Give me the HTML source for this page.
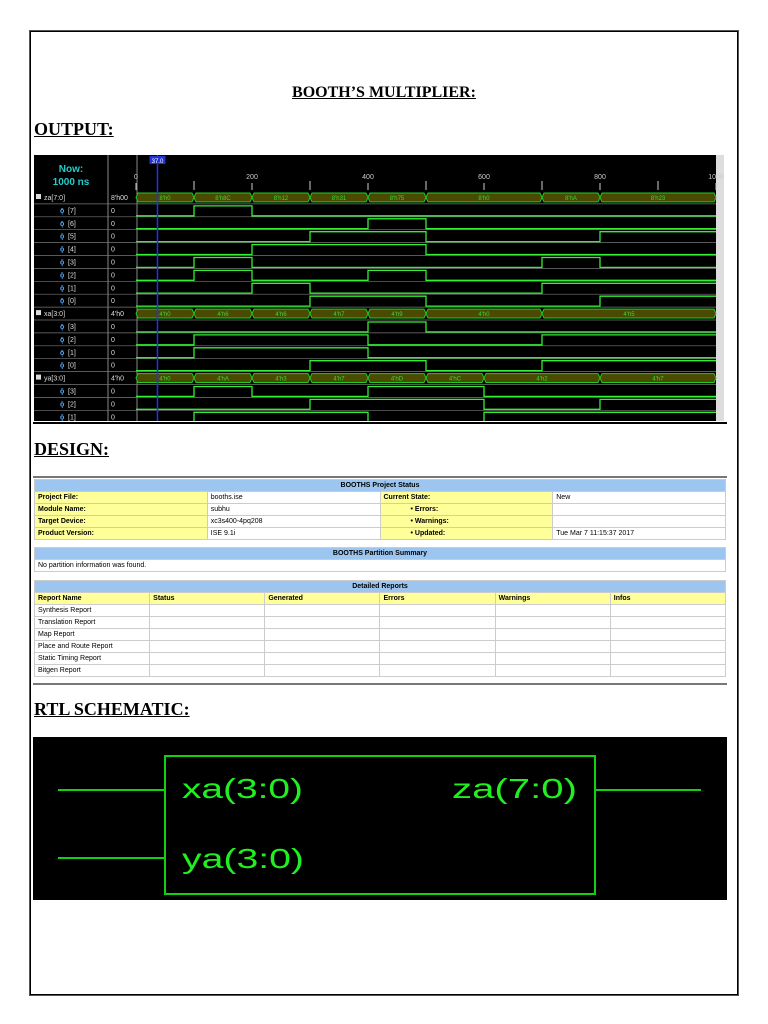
<!DOCTYPE html>
<html><head><meta charset="utf-8"><style>
body{margin:0;width:768px;height:1024px;background:#fff;position:relative;font-family:"Liberation Serif",serif;overflow:hidden}
.frame{position:absolute;left:30px;top:31px;width:706px;height:962px;border:1px solid #000;box-shadow:0 0 0 1px #555}
.h{position:absolute;font-weight:bold;text-decoration:underline;color:#000}
.line{position:absolute;left:33px;width:694px;height:1px;background:#000}
table{position:absolute;left:34px;width:692px;border-collapse:collapse;font-family:"Liberation Sans",sans-serif;font-size:7px;table-layout:fixed}
td{height:11px;padding:0 3px;border:1px solid #ccc;white-space:nowrap;overflow:hidden}
.hd td{background:#9cc6f0;text-align:center;font-weight:bold}
.y{background:#ffff99;font-weight:bold}
</style></head><body>
<div class="frame"></div>
<div class="h" style="left:0;width:768px;text-align:center;top:84px;font-size:16px">BOOTH’S MULTIPLIER:</div>
<div class="h" style="left:34px;top:119px;font-size:18px">OUTPUT:</div>
<div class="h" style="left:34px;top:439px;font-size:18px">DESIGN:</div>
<div class="h" style="left:34px;top:699px;font-size:18px">RTL SCHEMATIC:</div>
<div id="wv" style="position:absolute;left:34px;top:155px"></div>
<div class="line" style="top:422px;height:2px"></div>
<div class="line" style="top:476px;background:#777;height:2px"></div>
<div class="line" style="top:683px;background:#777;height:2px"></div>
<table style="top:479px">
<tr class="hd"><td colspan="4">BOOTHS Project Status</td></tr>
<tr><td class="y">Project File:</td><td>booths.ise</td><td class="y">Current State:</td><td>New</td></tr>
<tr><td class="y">Module Name:</td><td>subhu</td><td class="y" style="padding-left:30px">• Errors:</td><td></td></tr>
<tr><td class="y">Target Device:</td><td>xc3s400-4pq208</td><td class="y" style="padding-left:30px">• Warnings:</td><td></td></tr>
<tr><td class="y">Product Version:</td><td>ISE 9.1i</td><td class="y" style="padding-left:30px">• Updated:</td><td>Tue Mar 7 11:15:37 2017</td></tr>
</table>
<table style="top:547px">
<tr class="hd"><td>BOOTHS Partition Summary</td></tr>
<tr><td>No partition information was found.</td></tr>
</table>
<table style="top:580px">
<tr class="hd"><td colspan="6">Detailed Reports</td></tr>
<tr><td class="y">Report Name</td><td class="y">Status</td><td class="y">Generated</td><td class="y">Errors</td><td class="y">Warnings</td><td class="y">Infos</td></tr>
<tr><td>Synthesis Report</td><td></td><td></td><td></td><td></td><td></td></tr>
<tr><td>Translation Report</td><td></td><td></td><td></td><td></td><td></td></tr>
<tr><td>Map Report</td><td></td><td></td><td></td><td></td><td></td></tr>
<tr><td>Place and Route Report</td><td></td><td></td><td></td><td></td><td></td></tr>
<tr><td>Static Timing Report</td><td></td><td></td><td></td><td></td><td></td></tr>
<tr><td>Bitgen Report</td><td></td><td></td><td></td><td></td><td></td></tr>
</table>
<svg style="position:absolute;left:33px;top:737px" width="694" height="162">
<rect width="694" height="162" fill="#000"/>
<g stroke="#10d010" stroke-width="2" fill="none">
<rect x="132" y="19" width="430" height="138"/>
<line x1="25" y1="53" x2="132" y2="53"/><line x1="25" y1="121" x2="132" y2="121"/><line x1="562" y1="53" x2="668" y2="53"/>
</g>
<g fill="#20f020" font-family="Liberation Sans,sans-serif" font-size="28">
<text x="149" y="61" textLength="121" lengthAdjust="spacingAndGlyphs">xa(3:0)</text>
<text x="419" y="61" textLength="125" lengthAdjust="spacingAndGlyphs">za(7:0)</text>
<text x="149" y="131" textLength="122" lengthAdjust="spacingAndGlyphs">ya(3:0)</text></g>
</svg>
<div class="line" style="top:898px;height:2px"></div>
<script>
var X=function(t){return 136+58*t/100};
var s='<svg width="690" height="266" font-family="Liberation Sans,sans-serif">';
s+='<rect width="690" height="266" fill="#000"/><rect x="682" y="0" width="8" height="266" fill="#ddd"/>';
s+='<line x1="74" y1="0" x2="74" y2="266" stroke="#888"/><line x1="103" y1="0" x2="103" y2="266" stroke="#888"/>';
s+='<text x="37" y="17" fill="#2cc" font-size="10" font-weight="bold" text-anchor="middle">Now:</text><text x="37" y="30" fill="#2cc" font-size="10" font-weight="bold" text-anchor="middle">1000 ns</text>';
for(var k=0;k<=10;k++){var x=X(k*100)-34;s+='<line x1="'+x+'" y1="'+(k%2?26:28)+'" x2="'+x+'" y2="35" stroke="#ccc"/>';if(k%2==0)s+='<text x="'+x+'" y="24" fill="#ccc" font-size="7" text-anchor="middle">'+(k*100)+'</text>';}
var rows=[];
function bus(name,w,tr,vals,hex){rows.push({bus:1,name:name,tr:tr,vals:vals,w:w});for(var b=w-1;b>=0;b--)rows.push({name:'['+b+']',tr:tr,vals:vals,b:b});}
bus('za[7:0]',8,[100,200,300,400,500,700,800],[0,0x8C,0x12,0x31,0x75,0,0x0A,0x23]);
bus('xa[3:0]',4,[100,200,300,400,500,700],[0,6,6,7,9,0,5]);
bus('ya[3:0]',4,[100,200,300,400,500,600,800],[0,0xA,3,7,0xD,0xC,2,7]);
var y0=36,rh=12.9;
rows.forEach(function(r,i){var y=y0+i*rh;
 s+='<line x1="0" y1="'+(y+rh)+'" x2="682" y2="'+(y+rh)+'" stroke="#777" stroke-width="0.7"/>';
 var ed=[0].concat(r.tr).concat([1000]);
 if(r.bus){s+='<rect x="2" y="'+(y+3)+'" width="5" height="5" fill="#ddd"/><text x="10" y="'+(y+9)+'" fill="#ddd" font-size="7">'+r.name+'</text><text x="77" y="'+(y+9)+'" fill="#ddd" font-size="7">'+(r.w==8?"8'h00":"4'h0")+'</text>';
  for(var j=0;j<r.vals.length;j++){var a=X(ed[j])-34,b=X(ed[j+1])-34;s+='<polygon points="'+(a+2)+','+(y+2)+' '+(b-2)+','+(y+2)+' '+b+','+(y+rh/2)+' '+(b-2)+','+(y+rh-2)+' '+(a+2)+','+(y+rh-2)+' '+a+','+(y+rh/2)+'" fill="#4a4a00" stroke="#2c2"/>';
  s+='<text x="'+((a+b)/2)+'" y="'+(y+9)+'" fill="#3d3" font-size="6" text-anchor="middle">'+(r.w==8?"8'h":"4'h")+r.vals[j].toString(16).toUpperCase()+'</text>';}
 } else {s+='<text x="26" y="'+(y+9)+'" fill="#5af" font-size="7" font-weight="bold">ǭ</text><text x="34" y="'+(y+9)+'" fill="#ddd" font-size="7">'+r.name+'</text><text x="77" y="'+(y+9)+'" fill="#ddd" font-size="7">0</text>';
  var p='';for(var j=0;j<r.vals.length;j++){var v=(r.vals[j]>>r.b)&1,yy=v?y+2:y+rh-1,a=X(ed[j])-34,b=X(ed[j+1])-34;p+=(j?' L':'M')+a+','+yy+' L'+b+','+yy;}
  s+='<path d="'+p+'" fill="none" stroke="#3e3" stroke-width="1.3"/>';}
});
var cx=X(37)-34;s+='<line x1="'+cx+'" y1="0" x2="'+cx+'" y2="266" stroke="#23e" stroke-width="1.5"/><rect x="'+(cx-8)+'" y="1" width="16" height="8" fill="#23c"/><text x="'+cx+'" y="8" fill="#fff" font-size="6" text-anchor="middle">37.0</text>';
s+='</svg>';document.getElementById('wv').innerHTML=s;
</script>
</body></html>
